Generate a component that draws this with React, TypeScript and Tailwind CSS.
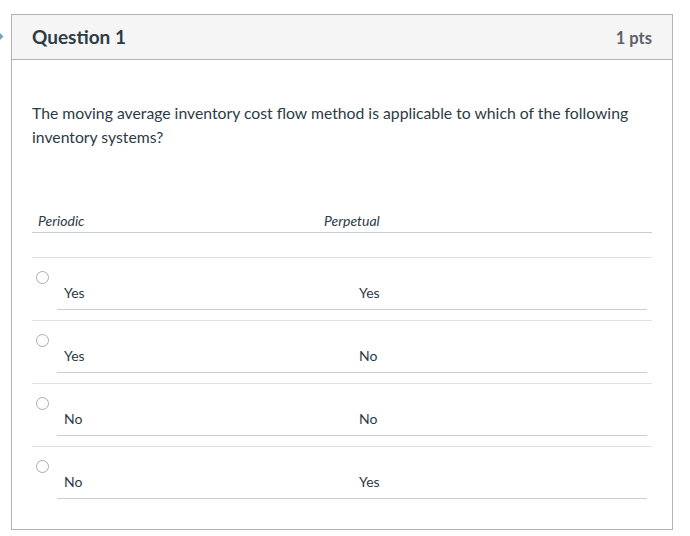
const rows = [
  ["Yes", "Yes"],
  ["Yes", "No"],
  ["No", "No"],
  ["No", "Yes"],
];

export default function App() {
  return (
    <div
      className="relative h-[536px] w-[690px] bg-white pl-[11px] pt-[14px] text-[#2d3b45]"
      style={{ fontFamily: "Lato, 'Liberation Sans', sans-serif" }}
    >
      <svg className="absolute left-0 top-[33px]" width="4" height="7" viewBox="0 0 4 7">
        <path d="M0 0 L3.5 3.5 L0 7 Z" fill="#6fa3c7" />
      </svg>
      <div className="h-[516px] w-[662px] border border-[#b3b3b3]">
        <div className="flex h-[45px] items-center justify-between border-b border-[#b3b3b3] bg-[#f5f5f5] px-5">
          <h2 className="text-[19px] font-bold">Question 1</h2>
          <span className="pt-[2px] text-[16.5px] font-bold text-[#5b6166]">1 pts</span>
        </div>
        <div className="px-5 pt-[41px]">
          <p className="text-[15.75px] leading-[24px]">
            The moving average inventory cost flow method is applicable to which of the following inventory systems?
          </p>
          <div className="mt-[59px] grid h-[25px] grid-cols-[286px_1fr] items-center border-b border-[#c7cdd1] pl-[6px] pt-[1px] text-[14px] italic">
            <span>Periodic</span>
            <span>Perpetual</span>
          </div>
          <div className="h-[25px] border-b border-[#dfe1e3]" />
          {rows.map((r, i) => (
            <div key={i} className={`flex h-[63px] ${i < 3 ? "border-b border-[#dfe1e3]" : ""}`}>
              <div className="w-[25px] pl-[4px] pt-[13px]">
                <span className="block h-[13px] w-[13px] rounded-full border border-[#a8acb0] bg-white" />
              </div>
              <div className="flex flex-col justify-start">
                <div className="mt-[25px] grid h-[27px] w-[590px] grid-cols-2 items-start border-b border-[#c7cdd1] text-[14px] leading-[20px]">
                  <span className="pl-[7px]">{r[0]}</span>
                  <span className="pl-[7px]">{r[1]}</span>
                </div>
              </div>
            </div>
          ))}
        </div>
      </div>
    </div>
  );
}
